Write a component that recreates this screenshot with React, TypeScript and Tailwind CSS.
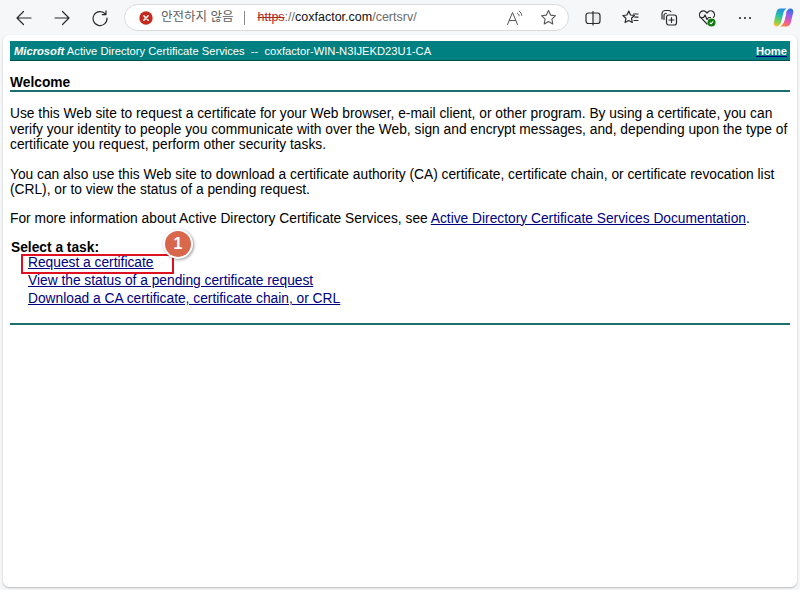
import React from "react";

const Tool = ({ children, w = "w-[38px]" }: { children: React.ReactNode; w?: string }) => (
  <div className={`${w} h-[35px] flex items-center justify-center shrink-0`}>{children}</div>
);

const stroke = { fill: "none", stroke: "#2b2b2b", strokeWidth: 1.2, strokeLinecap: "round" as const, strokeLinejoin: "round" as const };

export default function App() {
  return (
    <div className="w-[800px] h-[590px] bg-[#f5f7f8] flex flex-col overflow-hidden font-['Liberation_Sans',Arial,'Noto_Sans_CJK_KR',sans-serif]">
      <div className="h-[35px] flex items-center shrink-0 pl-[5px]">
        <Tool>
          <svg width="18" height="18" viewBox="0 0 18 18" {...stroke}><path d="M16 9H2M8.500 2.500 2 9l6.500 6.500" /></svg>
        </Tool>
        <Tool>
          <svg width="18" height="18" viewBox="0 0 18 18" {...stroke}><path d="M2 9h14M9.500 2.500 16 9l-6.500 6.500" /></svg>
        </Tool>
        <Tool>
          <svg width="18" height="18" viewBox="0 0 18 18" {...stroke}><path d="M14.500 5.200A7 7 0 1 0 16 9M15 1.800v3.800h-3.800" /></svg>
        </Tool>
        <div className="ml-[5px] w-[445px] h-[27px] rounded-full bg-white border border-[#d9dadb] flex items-center pl-[14px] pr-[11px] shrink-0">
          <svg width="14" height="14" viewBox="0 0 14 14" className="shrink-0">
            <circle cx="7" cy="7" r="6.700" fill="#c42b1c" />
            <path d="M4.800 4.800l4.400 4.400M9.200 4.800l-4.400 4.400" stroke="#fff" strokeWidth="1.500" strokeLinecap="round" />
          </svg>
          <span className="ml-[8px] text-[12.5px] text-[#5c5c5c] whitespace-nowrap">안전하지 않음</span>
          <span className="ml-[11px] w-px h-[14px] bg-[#8a8a8a]" />
          <span className="ml-[12px] text-[12.5px] whitespace-nowrap text-[#6b6b6b]">
            <span className="text-[#b3261e] line-through">https</span>:
            <span>//</span>
            <span className="text-[#111]">coxfactor.com</span>/certsrv/
          </span>
          <div className="ml-auto flex items-center gap-[16px]">
            <svg width="18" height="18" viewBox="0 0 18 18" fill="none" stroke="#555" strokeWidth="1" strokeLinecap="round" strokeLinejoin="round">
              <path d="M1.500 15.500 6.500 3.500l5 12M3.300 11.500h6.400M11.500 4.200c1 .6 1.500 1.500 1.600 2.600M13.300 2.200c1.600 1 2.300 2.500 2.400 4.200" />
            </svg>
            <svg width="17" height="17" viewBox="0 0 17 17" fill="none" stroke="#555" strokeWidth="1.100" strokeLinejoin="round">
              <path d="M8.500 1.600l2.100 4.500 4.900.6-3.600 3.400.9 4.900-4.300-2.400-4.300 2.400.9-4.900L1.500 6.700l4.900-.6z" />
            </svg>
          </div>
        </div>
        <div className="flex items-center ml-[5px]">
          <Tool>
            <svg width="16" height="16" viewBox="0 0 16 16" {...stroke}><rect x="1" y="3" width="14" height="10.500" rx="2.500" /><path d="M8 1.500v13.500" /><path d="M8 3.500h4.500a2 2 0 0 1 2 2v5.500a2 2 0 0 1-2 2H8z" fill="#2b2b2b" fillOpacity="0.06" stroke="none" /></svg>
          </Tool>
          <Tool>
            <svg width="18" height="18" viewBox="0 0 18 18" {...stroke}><path d="M6.800 2l1.700 4 4 .5-3 2.800.8 4.200-3.600-2-3.600 2 .8-4.200-3-2.800 4-.5zM11.500 5H16M13 8.200H16M12 11.500h4" /></svg>
          </Tool>
          <Tool>
            <svg width="18" height="18" viewBox="0 0 18 18" {...stroke}><path d="M4 10.500V6.500a2 2 0 0 1 2-2h.3M2 10V5A3.500 3.500 0 0 1 5.500 1.500h3.500a2 2 0 0 1 1.800 1.200" /><rect x="6.500" y="6" width="10" height="10" rx="2.200" /><path d="M11.500 8.500v5M9 11h5" /></svg>
          </Tool>
          <Tool>
            <svg width="20" height="20" viewBox="0 0 20 20">
              <path d="M10 16 3.600 9.400a3.800 3.800 0 0 1 5.400-5.400L10 5l1-1a3.800 3.800 0 0 1 5.400 5.400" {...stroke} />
              <path d="M3 9.500h3.500l1.500-2.500 2 4.500 1.500-2h2" {...stroke} />
              <circle cx="14.500" cy="14.500" r="4" fill="#107c10" />
              <path d="M12.800 14.600l1.200 1.200 2.200-2.400" fill="none" stroke="#fff" strokeWidth="1.100" />
            </svg>
          </Tool>
          <Tool>
            <svg width="16" height="16" viewBox="0 0 16 16" fill="#2b2b2b"><circle cx="3" cy="8" r="1.100" /><circle cx="8" cy="8" r="1.100" /><circle cx="13" cy="8" r="1.100" /></svg>
          </Tool>
          <Tool>
            <svg width="21" height="21" viewBox="0 0 20 20">
              <defs>
                <linearGradient id="l" x1="0.600" y1="0" x2="0.300" y2="1"><stop offset="0" stopColor="#1f8fe8" /><stop offset="0.450" stopColor="#2cc3a0" /><stop offset="0.750" stopColor="#7fd050" /><stop offset="1" stopColor="#f2c13a" /></linearGradient>
                <linearGradient id="r" x1="0.700" y1="0" x2="0.300" y2="1"><stop offset="0" stopColor="#2f6fe8" /><stop offset="0.350" stopColor="#9a5ee8" /><stop offset="0.700" stopColor="#ee5aa0" /><stop offset="1" stopColor="#f58a3c" /></linearGradient>
              </defs>
              <path d="M7 1.500H13C11 2.500 10.300 4 9.800 6L7.800 14C7.200 16.500 5.500 18.500 3.300 18.500C1.200 18.500 .3 16.500 .8 14.500L3 5.500C3.600 3 5 1.500 7 1.500Z" fill="url(#l)" />
              <path d="M13 18.500H6.500C8.800 17.800 9.700 16 10.200 14L12.200 6C12.800 3.500 14.500 1.500 16.700 1.500C18.800 1.500 19.700 3.500 19.200 5.500L17 14.500C16.400 17 15 18.500 13 18.500Z" fill="url(#r)" />
              <path d="M11.500 7.500 12.200 6 10.300 13.500 9.600 15Z" fill="#fff" fillOpacity="0.900" stroke="#fff" strokeWidth="0.800" />
            </svg>
          </Tool>
        </div>
      </div>
      <div className="relative mx-[3px] h-[552px] bg-white rounded-[6px] shadow-[0_1px_2px_rgba(0,0,0,0.25)] px-[7px] pt-[6px] text-[13.78px] text-black">
        <div className="h-[20px] bg-[#008080] border-b border-[#004d4d] flex items-center justify-between pl-[4px] pr-[3px] pt-[1px] text-white text-[11.2px]">
          <div className="whitespace-nowrap">
            <b className="italic text-[11.2px]">Microsoft</b> Active Directory Certificate Services &nbsp;--&nbsp; coxfactor-WIN-N3IJEKD23U1-CA
          </div>
          <a className="font-bold underline decoration-[#000080] underline-offset-[1px]">Home</a>
        </div>
        <div className="mt-[14px] h-[15px] font-bold leading-[16px]">Welcome</div>
        <div className="h-[2px] bg-[#1a7070] mb-[14px]" />
        <p className="leading-[15.5px]">
          Use this Web site to request a certificate for your Web browser, e-mail client, or other program. By using a certificate, you can verify your identity to people you communicate with over the Web, sign and encrypt messages, and, depending upon the type of certificate you request, perform other security tasks.
        </p>
        <p className="leading-[15.5px] mt-[14px]">
          You can also use this Web site to download a certificate authority (CA) certificate, certificate chain, or certificate revocation list (CRL), or to view the status of a pending request.
        </p>
        <p className="leading-[15.5px] mt-[13px]">
          For more information about Active Directory Certificate Services, see <a className="text-[#000080] underline">Active Directory Certificate Services Documentation</a>.
        </p>
        <div className="relative mt-[14px] ml-[1px]">
          <div className="font-bold h-[14px] leading-[15px]">Select a task:</div>
          <div className="pl-[17px] text-[#000080] underline flex flex-col leading-[18px]">
            <a className="h-[18px]">Request a certificate</a>
            <a className="h-[18px]">View the status of a pending certificate request</a>
            <a className="h-[18px]">Download a CA certificate, certificate chain, or CRL</a>
          </div>
          <div className="absolute left-[10px] top-[14px] w-[153px] h-[20px] border-2 border-[#e01020]" />
          <div className="absolute left-[152px] top-[-11px] w-[30px] h-[30px] rounded-full bg-[#d9674c] border-2 border-white shadow-[1px_1px_3px_rgba(0,0,0,0.4)] flex items-center justify-center text-white font-bold text-[16px]">1</div>
        </div>
        <div className="h-[2px] bg-[#1a7070] mt-[15px]" />
      </div>
    </div>
  );
}
